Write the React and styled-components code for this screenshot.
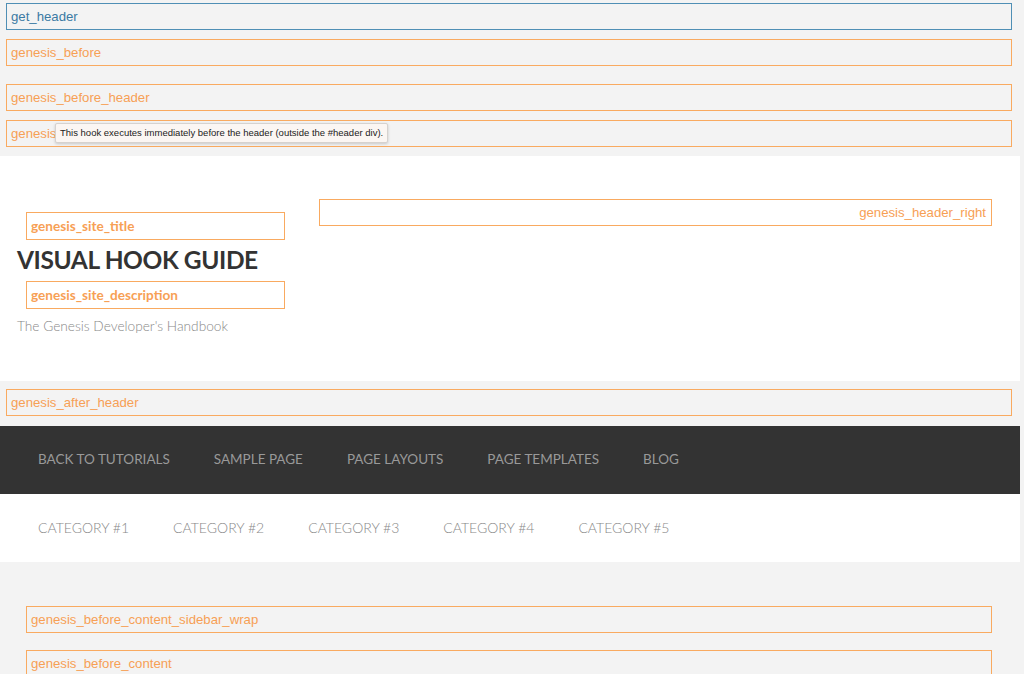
import React from 'react';
import styled, { createGlobalStyle } from 'styled-components';

const GlobalStyle = createGlobalStyle`
    html, body {
        margin: 0;
        padding: 0;
        background: #f3f3f3;
    }
    body {
        font-family: Lato, "Helvetica Neue", Arial, sans-serif;
        color: #333;
    }
`;

const mainNav = ['Back to Tutorials', 'Sample Page', 'Page Layouts', 'Page Templates', 'Blog'];
const subNav = ['Category #1', 'Category #2', 'Category #3', 'Category #4', 'Category #5'];

function App() {
    return (
        <>
            <GlobalStyle />
            <Page>
                <TopHooks>
                    <Hook $blue>get_header</Hook>
                    <Hook>genesis_before</Hook>
                    <Hook $gap={18}>genesis_before_header</Hook>
                    <Hook>
                        genesis
                        <Tooltip>This hook executes immediately before the header (outside the #header div).</Tooltip>
                    </Hook>
                </TopHooks>

                <SiteHeader>
                    <TitleArea>
                        <ThemeHook>genesis_site_title</ThemeHook>
                        <SiteTitle>Visual Hook Guide</SiteTitle>
                        <ThemeHook>genesis_site_description</ThemeHook>
                        <Description>The Genesis Developer's Handbook</Description>
                    </TitleArea>
                    <WidgetArea>
                        <Hook $right>genesis_header_right</Hook>
                    </WidgetArea>
                </SiteHeader>

                <AfterHeader>
                    <Hook>genesis_after_header</Hook>
                </AfterHeader>

                <Nav $dark>
                    {mainNav.map((item) => (
                        <NavItem key={item} $dark>{item}</NavItem>
                    ))}
                </Nav>
                <Nav>
                    {subNav.map((item) => (
                        <NavItem key={item}>{item}</NavItem>
                    ))}
                </Nav>

                <Content>
                    <Hook>genesis_before_content_sidebar_wrap</Hook>
                    <Hook $gap={17}>genesis_before_content</Hook>
                </Content>
            </Page>
        </>
    );
}

export default App;

const Page = styled.div`
    width: 1020px;
    height: 674px;
    overflow: hidden;
`;

const TopHooks = styled.div`
    padding: 3px 8px 9px 6px;
    display: flex;
    flex-direction: column;
`;

// outlined box that marks where a hook fires
const Hook = styled.div`
    position: relative;
    box-sizing: border-box;
    height: 27px;
    margin-top: ${(p) => (p.$gap !== undefined ? p.$gap : 9)}px;
    &:first-child {
        margin-top: 0;
    }
    padding: 0 5px 0 4px;
    display: flex;
    align-items: center;
    justify-content: ${(p) => (p.$right ? 'flex-end' : 'flex-start')};
    border: 1px solid ${(p) => (p.$blue ? '#4f8fb5' : '#f9aa60')};
    color: ${(p) => (p.$blue ? '#3b7aa3' : '#f7a055')};
    background: ${(p) => (p.$right ? '#fff' : 'transparent')};
    font-family: "Liberation Sans", Arial, sans-serif;
    font-size: 13.2px;
`;

const Tooltip = styled.span`
    position: absolute;
    left: 48px;
    top: 2px;
    padding: 3px 4px 4px;
    background: #fbf6f3;
    border: 1px solid #d6d2cf;
    border-radius: 2px;
    box-shadow: 0 1px 3px rgba(0, 0, 0, 0.18);
    color: #222;
    font-size: 9.5px;
    white-space: nowrap;
`;

const SiteHeader = styled.header`
    background: #fff;
    height: 225px;
    display: flex;
`;

const TitleArea = styled.div`
    width: 302px;
    padding: 56px 0 0 17px;
    box-sizing: border-box;
    display: flex;
    flex-direction: column;
`;

const ThemeHook = styled.div`
    box-sizing: border-box;
    height: 28px;
    width: 259px;
    margin-left: 9px;
    padding: 0 4px;
    display: flex;
    align-items: center;
    border: 1px solid #f9aa60;
    color: #f7a055;
    font-family: Lato, sans-serif;
    font-weight: 700;
    font-size: 13.6px;
`;

const SiteTitle = styled.h1`
    margin: 6px 0 7px;
    font-family: Lato, sans-serif;
    font-weight: 700;
    font-size: 24.5px;
    line-height: 28px;
    letter-spacing: -0.4px;
    text-transform: uppercase;
    color: #333;
`;

const Description = styled.p`
    margin: 8px 0 0;
    font-family: Lato, sans-serif;
    font-weight: 300;
    font-size: 13.7px;
    line-height: 17px;
    color: #888;
`;

const WidgetArea = styled.div`
    flex: 1;
    padding: 43px 28px 0 17px;
`;

const AfterHeader = styled.div`
    padding: 8px 8px 10px 6px;
`;

const Nav = styled.nav`
    height: 68px;
    display: flex;
    align-items: center;
    padding: 0 0 2px 16px;
    box-sizing: border-box;
    background: ${(p) => (p.$dark ? '#333' : '#fff')};
`;

const NavItem = styled.span`
    padding: 0 22px;
    font-family: Lato, sans-serif;
    font-weight: ${(p) => (p.$dark ? 400 : 300)};
    font-size: ${(p) => (p.$dark ? 13.5 : 14)}px;
    text-transform: uppercase;
    color: ${(p) => (p.$dark ? '#999' : '#888')};
`;

const Content = styled.div`
    padding: 44px 28px 0 26px;
    display: flex;
    flex-direction: column;
`;
